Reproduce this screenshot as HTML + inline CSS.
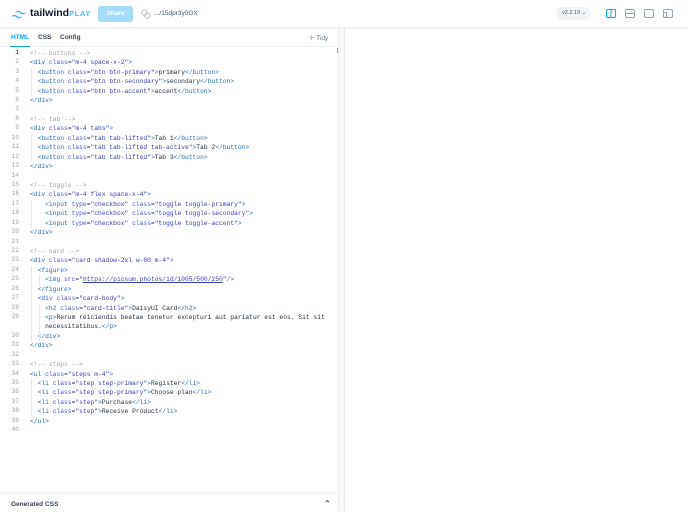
<!DOCTYPE html>
<html><head><meta charset="utf-8"><style>
*{margin:0;padding:0;box-sizing:border-box}
body{width:688px;height:512px;overflow:hidden;background:#fff;font-family:"Liberation Sans",sans-serif;position:relative}
.hdr{position:absolute;left:0;top:0;width:688px;height:28px;border-bottom:1px solid #eceef1;box-shadow:0 1px 2px rgba(0,0,0,.03)}
.tabs{position:absolute;left:0;top:28px;width:338px;height:19px;border-bottom:1px solid #eceef1;font-size:6.5px;font-weight:bold;color:#334155}
.ed{position:absolute;left:0;top:48px;width:338px;height:446px;font-family:"Liberation Mono",monospace;font-size:6.3px;color:#1f2937}
.ln{position:absolute;left:0;width:19px;text-align:right;color:#9ca3af}
.cd{position:absolute;left:30px;white-space:pre}
.t{color:#2a6fb3}.a{color:#4a58c8}.s{color:#3a3fae}.c{color:#9ca3af}
.u{color:#3a3fae;text-decoration:underline}
.div{position:absolute;left:338px;top:28px;width:7px;height:484px;background:#f8f9fb;border-left:1px solid #eceef1;border-right:1px solid #eceef1}
.bot{position:absolute;left:0;top:493px;width:338px;height:19px;border-top:1px solid #eceef1;font-size:6.5px;font-weight:bold;color:#334155;box-shadow:0 -1px 3px rgba(0,0,0,.04)}
.g{position:absolute;width:1px;background:#e5e7eb}
</style></head><body>
<div class="hdr">
 <svg style="position:absolute;left:11px;top:10px" width="16" height="10" viewBox="0 0 16 10"><path d="M4 3.5c1-2.5 2.8-3.2 5-2.2 1.3.6 2 1.6 3.5 1.8 1.2.1 2.2-.4 3-1.4-1 2.5-2.8 3.2-5 2.2-1.3-.6-2-1.6-3.5-1.8C5.8 2 4.8 2.5 4 3.5zM0 7.5c1-2.5 2.8-3.2 5-2.2 1.3.6 2 1.6 3.5 1.8 1.2.1 2.2-.4 3-1.4-1 2.5-2.8 3.2-5 2.2-1.3-.6-2-1.6-3.5-1.8C1.8 6 .8 6.5 0 7.5z" fill="#38bdf8"/></svg>
 <div style="position:absolute;left:30px;top:7px;font-size:10.5px;font-weight:bold;color:#0f172a">tailwind<span style="color:#38bdf8;font-size:7.5px;letter-spacing:.6px">PLAY</span></div>
 <div style="position:absolute;left:98px;top:6px;width:35px;height:16px;background:#a5dcf7;border-radius:3px;color:#fff;font-size:6.5px;font-weight:bold;text-align:center;line-height:16px">Share</div>
 <svg style="position:absolute;left:141px;top:9px" width="10" height="10" viewBox="0 0 10 10" fill="none" stroke="#c4c8ce" stroke-width="1"><rect x="1" y="1" width="5" height="5" rx="1.5" transform="rotate(45 3.5 3.5)"/><rect x="4" y="4" width="5" height="5" rx="1.5" transform="rotate(45 6.5 6.5)"/></svg>
 <div style="position:absolute;left:154px;top:10px;font-size:6.5px;color:#475569">.../15dpr3y0GX</div>
 <div style="position:absolute;left:556px;top:7px;width:35px;height:13px;background:#f1f3f6;border-radius:7px;font-size:5.5px;color:#475569;line-height:13px;padding-left:6px">v2.2.19 ⌄</div>
 <svg style="position:absolute;left:605px;top:8px" width="70" height="12" viewBox="0 0 70 12" fill="none" stroke-width="1"><rect x="1.5" y="1.5" width="9" height="8" rx="1.5" stroke="#0ea5e9"/><path d="M6 1.5v8" stroke="#0ea5e9"/><rect x="20.5" y="1.5" width="9" height="8" rx="1.5" stroke="#94a3b8"/><path d="M20.5 5.5h9" stroke="#94a3b8"/><rect x="39.5" y="1.5" width="9" height="8" rx="1.5" stroke="#94a3b8"/><rect x="58.5" y="1.5" width="9" height="8" rx="1.5" stroke="#94a3b8"/><path d="M58.5 4.5h3v5" stroke="#94a3b8"/></svg>
</div>
<div class="tabs">
 <span style="position:absolute;left:11px;top:6px;color:#0ea5e9">HTML</span>
 <div style="position:absolute;left:10px;top:18px;width:20px;height:1px;background:#0ea5e9"></div>
 <span style="position:absolute;left:38px;top:6px">CSS</span>
 <span style="position:absolute;left:60px;top:6px">Config</span>
 <span style="position:absolute;left:309px;top:6px;color:#94a3b8;font-weight:normal">✢ <span style="color:#64748b">Tidy</span></span>
</div>
<div class="ed" id="ed"></div>
<div style="position:absolute;left:337px;top:48px;width:3px;height:5px;background:#9ca3af"></div>
<div class="div"></div>
<div class="bot"><span style="position:absolute;left:11px;top:7px">Generated CSS</span><span style="position:absolute;left:324px;top:5px;color:#475569;font-size:8px">⌃</span></div>
<script>
const L=[
'<span class="c">&lt;!-- buttons --&gt;</span>',
'<span class="t">&lt;div</span> <span class="a">class</span>=<span class="s">"m-4 space-x-2"</span><span class="t">&gt;</span>',
'  <span class="t">&lt;button</span> <span class="a">class</span>=<span class="s">"btn btn-primary"</span><span class="t">&gt;</span>primary<span class="t">&lt;/button&gt;</span>',
'  <span class="t">&lt;button</span> <span class="a">class</span>=<span class="s">"btn btn-secondary"</span><span class="t">&gt;</span>secondary<span class="t">&lt;/button&gt;</span>',
'  <span class="t">&lt;button</span> <span class="a">class</span>=<span class="s">"btn btn-accent"</span><span class="t">&gt;</span>accent<span class="t">&lt;/button&gt;</span>',
'<span class="t">&lt;/div&gt;</span>','',
'<span class="c">&lt;!-- tab --&gt;</span>',
'<span class="t">&lt;div</span> <span class="a">class</span>=<span class="s">"m-4 tabs"</span><span class="t">&gt;</span>',
'  <span class="t">&lt;button</span> <span class="a">class</span>=<span class="s">"tab tab-lifted"</span><span class="t">&gt;</span>Tab 1<span class="t">&lt;/button&gt;</span>',
'  <span class="t">&lt;button</span> <span class="a">class</span>=<span class="s">"tab tab-lifted tab-active"</span><span class="t">&gt;</span>Tab 2<span class="t">&lt;/button&gt;</span>',
'  <span class="t">&lt;button</span> <span class="a">class</span>=<span class="s">"tab tab-lifted"</span><span class="t">&gt;</span>Tab 3<span class="t">&lt;/button&gt;</span>',
'<span class="t">&lt;/div&gt;</span>','',
'<span class="c">&lt;!-- toggle --&gt;</span>',
'<span class="t">&lt;div</span> <span class="a">class</span>=<span class="s">"m-4 flex space-x-4"</span><span class="t">&gt;</span>',
'    <span class="t">&lt;input</span> <span class="a">type</span>=<span class="s">"checkbox"</span> <span class="a">class</span>=<span class="s">"toggle toggle-primary"</span><span class="t">&gt;</span>',
'    <span class="t">&lt;input</span> <span class="a">type</span>=<span class="s">"checkbox"</span> <span class="a">class</span>=<span class="s">"toggle toggle-secondary"</span><span class="t">&gt;</span>',
'    <span class="t">&lt;input</span> <span class="a">type</span>=<span class="s">"checkbox"</span> <span class="a">class</span>=<span class="s">"toggle toggle-accent"</span><span class="t">&gt;</span>',
'<span class="t">&lt;/div&gt;</span>','',
'<span class="c">&lt;!-- card --&gt;</span>',
'<span class="t">&lt;div</span> <span class="a">class</span>=<span class="s">"card shadow-2xl w-80 m-4"</span><span class="t">&gt;</span>',
'  <span class="t">&lt;figure&gt;</span>',
'    <span class="t">&lt;img</span> <span class="a">src</span>=<span class="s">"<span class="u">https://picsum.photos/id/1005/500/250</span>"</span><span class="t">/&gt;</span>',
'  <span class="t">&lt;/figure&gt;</span>',
'  <span class="t">&lt;div</span> <span class="a">class</span>=<span class="s">"card-body"</span><span class="t">&gt;</span>',
'    <span class="t">&lt;h2</span> <span class="a">class</span>=<span class="s">"card-title"</span><span class="t">&gt;</span>DaisyUI Card<span class="t">&lt;/h2&gt;</span>',
'    <span class="t">&lt;p&gt;</span>Rerum reiciendis beatae tenetur excepturi aut pariatur est eos. Sit sit\n    necessitatibus.<span class="t">&lt;/p&gt;</span>',
'  <span class="t">&lt;/div&gt;</span>',
'<span class="t">&lt;/div&gt;</span>','',
'<span class="c">&lt;!-- steps --&gt;</span>',
'<span class="t">&lt;ul</span> <span class="a">class</span>=<span class="s">"steps m-4"</span><span class="t">&gt;</span>',
'  <span class="t">&lt;li</span> <span class="a">class</span>=<span class="s">"step step-primary"</span><span class="t">&gt;</span>Register<span class="t">&lt;/li&gt;</span>',
'  <span class="t">&lt;li</span> <span class="a">class</span>=<span class="s">"step step-primary"</span><span class="t">&gt;</span>Choose plan<span class="t">&lt;/li&gt;</span>',
'  <span class="t">&lt;li</span> <span class="a">class</span>=<span class="s">"step"</span><span class="t">&gt;</span>Purchase<span class="t">&lt;/li&gt;</span>',
'  <span class="t">&lt;li</span> <span class="a">class</span>=<span class="s">"step"</span><span class="t">&gt;</span>Receive Product<span class="t">&lt;/li&gt;</span>',
'<span class="t">&lt;/ul&gt;</span>',''];
const H=9.43,T=1;let h='',row=0;
L.forEach((l,i)=>{const y=T+row*H;h+=`<div class="ln" style="top:${y}px;${i==0?'color:#111':''}">${i+1}</div><div class="cd" style="top:${y}px;line-height:${H}px">${l}</div>`;row+=(l.includes('\n')?2:1);});
const g=[[3,5,0],[10,12,0],[17,19,0],[24,30,0],[25,25,1],[28,30,1],[35,38,0]];
g.forEach(([a,b,d])=>{const y=T+(a-1)*H+(a>=30?H:0);const e=T+b*H+(b>=30?H:0);h+=`<div class="g" style="left:${31+d*7.6}px;top:${y}px;height:${e-y}px"></div>`;});
document.getElementById('ed').innerHTML=h;
</script>
</body></html>
